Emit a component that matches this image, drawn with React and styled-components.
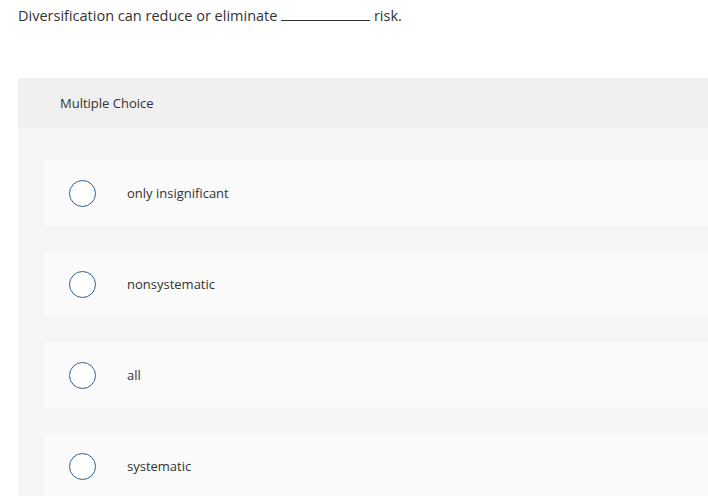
import * as React from 'react'
import styled, { createGlobalStyle } from 'styled-components'

const options = ['only insignificant', 'nonsystematic', 'all', 'systematic']

const GlobalStyle = createGlobalStyle`
  html, body {
    margin: 0;
    padding: 0;
    background: #fff;
    font-family: "Open Sans", Arial, sans-serif;
    color: #333;
  }
`

export default function App() {
  const [picked, setPicked] = React.useState(null)

  return (
    <Page>
      <GlobalStyle />
      <Question>
        Diversification can reduce or eliminate <Blank /> risk.
      </Question>
      <Panel>
        <PanelHeader>Multiple Choice</PanelHeader>
        <PanelBody>
          {options.map((label, i) => (
            <Option key={label} onClick={() => setPicked(i)}>
              <Radio $checked={picked === i} />
              <OptionLabel>{label}</OptionLabel>
            </Option>
          ))}
        </PanelBody>
      </Panel>
    </Page>
  )
}

const Page = styled.div`
  padding: 6px 0 0 18px;
  height: 490px;
  overflow: hidden;
`

const Question = styled.p`
  margin: 0;
  height: 20px;
  font-size: 14.5px;
  line-height: 20px;
  color: #333;
`

const Blank = styled.span`
  display: inline-block;
  width: 89px;
  height: 14px;
  border-bottom: 1px solid #333;
  vertical-align: baseline;
`

const Panel = styled.div`
  margin-top: 52px;
  background: #f5f5f5;
`

const PanelHeader = styled.div`
  height: 50px;
  display: flex;
  align-items: center;
  padding-left: 42px;
  background: #f0f0f0;
  font-size: 13px;
  color: #333;
`

const PanelBody = styled.div`
  display: flex;
  flex-direction: column;
  gap: 25px;
  padding: 32px 0 0 26px;
`

const Option = styled.div`
  height: 66px;
  display: flex;
  align-items: center;
  padding-left: 25px;
  background: #fafafa;
  border-radius: 3px 0 0 3px;
  cursor: pointer;
`

const Radio = styled.span`
  width: 25px;
  height: 25px;
  flex: none;
  border: 1.5px solid #2e5f8f;
  border-radius: 50%;
  background: ${(p) => (p.$checked ? '#2e5f8f' : '#fff')};
  box-shadow: ${(p) => (p.$checked ? 'inset 0 0 0 5px #fff' : 'none')};
`

const OptionLabel = styled.span`
  margin-left: 31px;
  font-size: 13px;
  color: #333;
`
